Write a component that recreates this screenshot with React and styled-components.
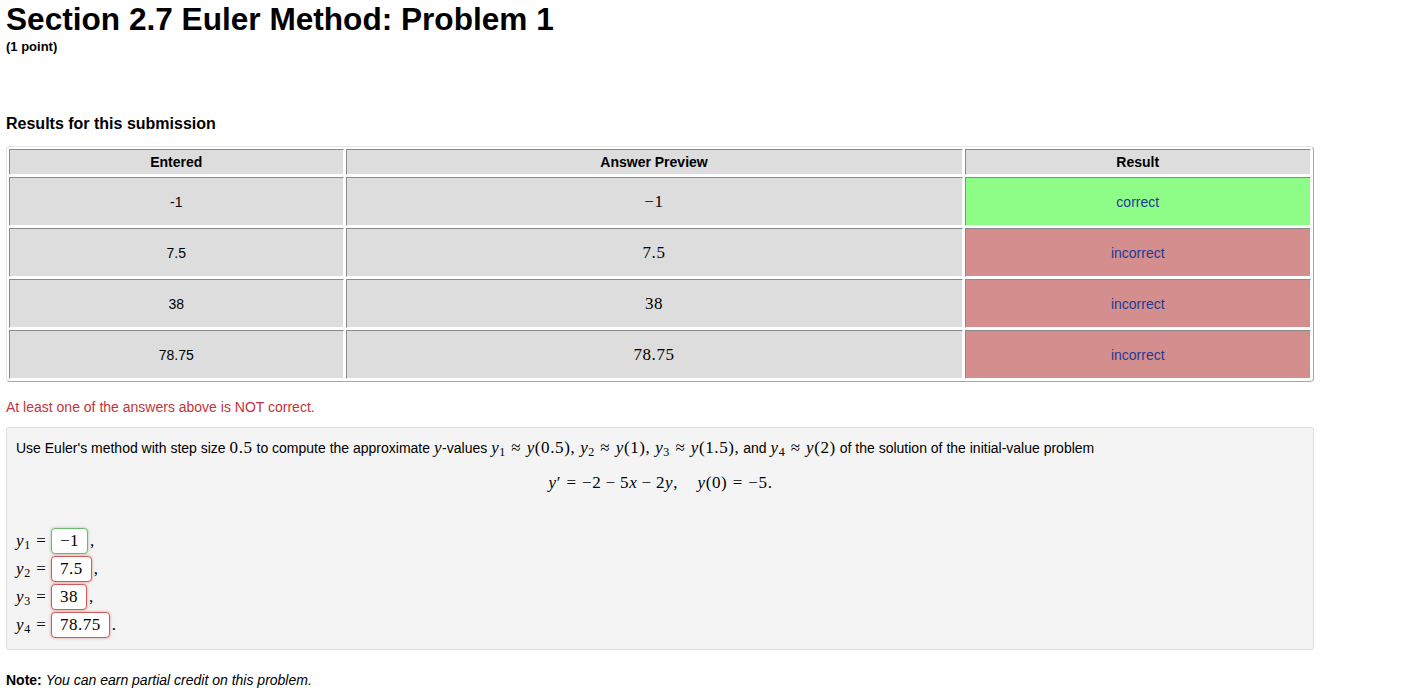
import React from "react";
import styled, { createGlobalStyle } from "styled-components";

const Global = createGlobalStyle`
  body {
    margin: 0;
    padding: 0 6px;
    background: #fff;
    font-family: "Liberation Sans", Arial, Helvetica, sans-serif;
    font-size: 14px;
    color: #000;
  }
`;

const Title = styled.h1`
  margin: 0;
  padding-top: 1px;
  font-size: 31.6px;
  line-height: 36px;
  font-weight: 700;
`;

const Points = styled.div`
  font-size: 13px;
  font-weight: 700;
  margin-top: 2px;
`;

const SubHead = styled.h2`
  margin: 60px 0 12px;
  font-size: 16px;
  font-weight: 700;
  line-height: 20px;
`;

const Table = styled.table`
  width: 1308px;
  border-collapse: separate;
  border-spacing: 2px;
  border: 1px solid;
  border-radius: 4px;
  border-color: #e4e4e4 #a8a8a8 #a8a8a8 #e4e4e4;
  font-size: 14px;

  th,
  td {
    background: #ddd;
    border: 1px solid;
    border-color: #8a8a8a #fff #fff #8a8a8a;
    text-align: center;
  }
  th {
    height: 24px;
    padding: 0;
    font-weight: 700;
  }
  td {
    height: 47px;
    padding: 0;
  }
`;

const Result = styled.td`
  && {
    background: ${(p) => (p.ok ? "#8efd87" : "#d48e8e")};
    color: #1f3a93;
  }
`;

const Math = styled.span`
  font-family: "Liberation Serif", "DejaVu Serif", serif;
  font-size: 17px;
  letter-spacing: 0.6px;
  white-space: nowrap;
`;

const V = styled.i`
  font-family: "Liberation Serif", "DejaVu Serif", serif;
  font-style: italic;
`;

const Rel = styled.span`
  margin: 0 0.32em;
`;

const Op = styled.span`
  margin: 0 0.25em;
`;

const Sub = styled.sub`
  font-size: 12px;
  font-style: normal;
  vertical-align: -3px;
  line-height: 0;
`;

const Warning = styled.div`
  color: #c4343c;
  margin: 17px 0 11px;
  line-height: 17px;
`;

const Problem = styled.div`
  width: 1289px;
  background: #f4f4f4;
  border: 1px solid #dedede;
  border-radius: 3px;
  padding: 10px 8px 10px 9px;
`;

const Para = styled.p`
  margin: 0;
  line-height: 20px;
`;

const Display = styled.div`
  text-align: center;
  margin: 15px 0 34px;
`;

const AnswerLine = styled.div`
  display: flex;
  align-items: center;
  height: 28px;
`;

const Label = styled(Math)`
  display: inline-block;
  width: 35px;
  margin-left: 0;
`;

const Answer = styled.span`
  display: inline-flex;
  align-items: center;
  height: 24px;
  padding: 0 8px;
  background: #fff;
  border: 1px solid ${(p) => (p.ok ? "#6fb86f" : "#d35a5a")};
  border-radius: 4px;
  box-shadow: 0 0 3px ${(p) => (p.ok ? "rgba(60,160,60,0.5)" : "rgba(210,60,60,0.5)")};
  font-family: "Liberation Serif", "DejaVu Serif", serif;
  font-size: 17px;
  letter-spacing: 0.5px;
`;

const Punct = styled(Math)`
  margin-left: 2px;
  align-self: flex-end;
  padding-bottom: 4px;
`;

const Note = styled.div`
  margin-top: 22px;
  font-size: 14px;
  b {
    font-weight: 700;
  }
  i {
    font-style: italic;
  }
`;

const rows = [
  { entered: "-1", preview: "\u22121", ok: true },
  { entered: "7.5", preview: "7.5", ok: false },
  { entered: "38", preview: "38", ok: false },
  { entered: "78.75", preview: "78.75", ok: false },
];

const answers = [
  ["1", "\u22121", true, ","],
  ["2", "7.5", false, ","],
  ["3", "38", false, ","],
  ["4", "78.75", false, "."],
];

const Y = ({ n }) => (
  <V>
    y<Sub>{n}</Sub>
  </V>
);

export default function App() {
  return (
    <>
      <Global />
      <Title>Section 2.7 Euler Method: Problem 1</Title>
      <Points>(1 point)</Points>
      <SubHead>Results for this submission</SubHead>
      <Table>
        <colgroup>
          <col style={{ width: 336 }} />
          <col style={{ width: 620 }} />
          <col style={{ width: 348 }} />
        </colgroup>
        <thead>
          <tr>
            <th>Entered</th>
            <th>Answer Preview</th>
            <th>Result</th>
          </tr>
        </thead>
        <tbody>
          {rows.map((r) => (
            <tr key={r.entered}>
              <td>{r.entered}</td>
              <td>
                <Math>{r.preview}</Math>
              </td>
              <Result ok={r.ok}>{r.ok ? "correct" : "incorrect"}</Result>
            </tr>
          ))}
        </tbody>
      </Table>
      <Warning>At least one of the answers above is NOT correct.</Warning>
      <Problem>
        <Para>
          Use Euler's method with step size <Math>0.5</Math> to compute the approximate{" "}
          <Math>
            <V>y</V>
          </Math>
          -values{" "}
          <Math>
            <Y n="1" />
            <Rel>≈</Rel>
            <V>y</V>(0.5), <Y n="2" />
            <Rel>≈</Rel>
            <V>y</V>(1), <Y n="3" />
            <Rel>≈</Rel>
            <V>y</V>(1.5),
          </Math>{" "}
          and{" "}
          <Math>
            <Y n="4" />
            <Rel>≈</Rel>
            <V>y</V>(2)
          </Math>{" "}
          of the solution of the initial-value problem
        </Para>
        <Display>
          <Math>
            <V>y</V>′<Rel>=</Rel>−2<Op>−</Op>5<V>x</V>
            <Op>−</Op>2<V>y</V>,&nbsp;&nbsp;&nbsp;&nbsp;<V>y</V>(0)<Rel>=</Rel>−5.
          </Math>
        </Display>
        {answers.map(([n, v, ok, p]) => (
          <AnswerLine key={n}>
            <Label>
              <Y n={n} />
              <Rel>=</Rel>
            </Label>
            <Answer ok={ok}>{v}</Answer>
            <Punct>{p}</Punct>
          </AnswerLine>
        ))}
      </Problem>
      <Note>
        <b>Note:</b> <i>You can earn partial credit on this problem.</i>
      </Note>
    </>
  );
}
